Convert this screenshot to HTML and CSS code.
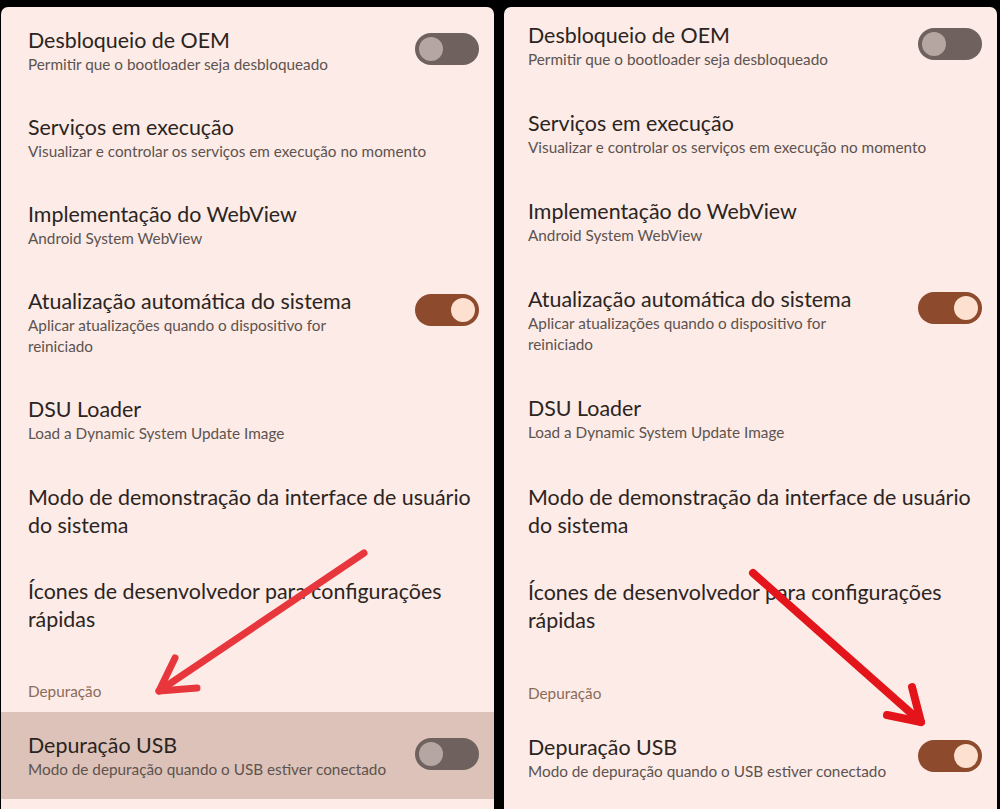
FILE: index.html
```html
<!DOCTYPE html>
<html lang="pt">
<head>
    <meta charset="UTF-8">
    <meta name="viewport" content="width=device-width, initial-scale=1.0">
    <title>Opções do desenvolvedor</title>
    <link rel="stylesheet" href="styles.css">
</head>

<body>
    <div class="screens">
        <div class="panel left">
            <div class="list">
                <div class="row">
                    <div class="text">
                        <div class="title">Desbloqueio de OEM</div>
                        <div class="summary">Permitir que o bootloader seja desbloqueado</div>
                    </div>
                    <span class="switch"></span>
                </div>
                <div class="row">
                    <div class="text">
                        <div class="title">Serviços em execução</div>
                        <div class="summary">Visualizar e controlar os serviços em execução no momento</div>
                    </div>
                </div>
                <div class="row">
                    <div class="text">
                        <div class="title">Implementação do WebView</div>
                        <div class="summary">Android System WebView</div>
                    </div>
                </div>
                <div class="row">
                    <div class="text">
                        <div class="title">Atualização automática do sistema</div>
                        <div class="summary">Aplicar atualizações quando o dispositivo for<br>reiniciado</div>
                    </div>
                    <span class="switch on"></span>
                </div>
                <div class="row">
                    <div class="text">
                        <div class="title">DSU Loader</div>
                        <div class="summary">Load a Dynamic System Update Image</div>
                    </div>
                </div>
                <div class="row tall">
                    <div class="text">
                        <div class="title">Modo de demonstração da interface de usuário<br>do sistema</div>
                    </div>
                </div>
                <div class="row">
                    <div class="text">
                        <div class="title">Ícones de desenvolvedor para configurações<br>rápidas</div>
                    </div>
                </div>
                <div class="category">Depuração</div>
                <div class="row pressed">
                    <div class="text">
                        <div class="title">Depuração USB</div>
                        <div class="summary">Modo de depuração quando o USB estiver conectado</div>
                    </div>
                    <span class="switch"></span>
                </div>
            </div>
        </div>

        <div class="panel right">
            <div class="list">
                <div class="row">
                    <div class="text">
                        <div class="title">Desbloqueio de OEM</div>
                        <div class="summary">Permitir que o bootloader seja desbloqueado</div>
                    </div>
                    <span class="switch"></span>
                </div>
                <div class="row">
                    <div class="text">
                        <div class="title">Serviços em execução</div>
                        <div class="summary">Visualizar e controlar os serviços em execução no momento</div>
                    </div>
                </div>
                <div class="row">
                    <div class="text">
                        <div class="title">Implementação do WebView</div>
                        <div class="summary">Android System WebView</div>
                    </div>
                </div>
                <div class="row">
                    <div class="text">
                        <div class="title">Atualização automática do sistema</div>
                        <div class="summary">Aplicar atualizações quando o dispositivo for<br>reiniciado</div>
                    </div>
                    <span class="switch on"></span>
                </div>
                <div class="row">
                    <div class="text">
                        <div class="title">DSU Loader</div>
                        <div class="summary">Load a Dynamic System Update Image</div>
                    </div>
                </div>
                <div class="row tall">
                    <div class="text">
                        <div class="title">Modo de demonstração da interface de usuário<br>do sistema</div>
                    </div>
                </div>
                <div class="row">
                    <div class="text">
                        <div class="title">Ícones de desenvolvedor para configurações<br>rápidas</div>
                    </div>
                </div>
                <div class="category">Depuração</div>
                <div class="row">
                    <div class="text">
                        <div class="title">Depuração USB</div>
                        <div class="summary">Modo de depuração quando o USB estiver conectado</div>
                    </div>
                    <span class="switch on"></span>
                </div>
            </div>
        </div>
    </div>

    <!-- hand drawn arrows on top of the screenshots -->
    <svg class="marks" width="1000" height="809" viewBox="0 0 1000 809">
        <g fill="none" stroke="#e8373c" stroke-width="7" stroke-linecap="round" stroke-linejoin="round">
            <path d="M364 553 L159 691"/>
            <path d="M175 658 L159 691 L197 688"/>
        </g>
        <g fill="none" stroke="#e3141a" stroke-width="8" stroke-linecap="round" stroke-linejoin="round">
            <path d="M753 573 L921 722"/>
            <path d="M912 687 L921 722 L887 715"/>
        </g>
    </svg>
</body>
</html>
```

FILE: styles.css
```css
body {
    margin: 0;
    background: #000;
    font-family: Lato, "Noto Sans", sans-serif;
    overflow: hidden;
}

.screens {
    display: flex;
    gap: 10px;
    height: 809px;
    padding: 7px 2px 0 1px;
    box-sizing: border-box;
}

.panel {
    width: 493px;
    background: #fcebe7;
    border-radius: 7px 7px 0 0;
    overflow: hidden;
}

.list {
    display: flex;
    flex-direction: column;
}

.row {
    display: flex;
    align-items: center;
    padding: 19px 15px 19px 27px;
}

.row.tall {
    padding-top: 20px;
}

.text {
    flex: 1;
}

.title {
    font-size: 21.4px;
    line-height: 28px;
    color: #2b2421;
}

.summary {
    font-size: 15.3px;
    line-height: 21px;
    color: #5d534f;
}

.category {
    padding: 29px 27px 10px;
    font-size: 15.3px;
    line-height: 21px;
    color: #8b6b58;
}

.row.pressed {
    background: #dcc2b8;
}

/* toggle switch */
.switch {
    position: relative;
    flex: none;
    width: 64px;
    height: 32px;
    border-radius: 16px;
    background: #6f625e;
    align-self: flex-start;
    margin-top: 7px;
}

.switch::after {
    content: "";
    position: absolute;
    top: 4px;
    left: 4px;
    width: 24px;
    height: 24px;
    border-radius: 50%;
    background: #b6a6a2;
}

.switch.on {
    background: #8d4a2d;
}

.switch.on::after {
    left: 36px;
    background: #fde0d0;
}

/* right screenshot is shifted a little */
.panel.right .list {
    margin-top: -6px;
}

.panel.right .row {
    padding: 19.5px 15px 19.5px 24px;
}

.panel.right .row.tall {
    padding-top: 21px;
}

.panel.right .category {
    padding-left: 24px;
}

.marks {
    position: absolute;
    left: 0;
    top: 0;
    pointer-events: none;
}
```
